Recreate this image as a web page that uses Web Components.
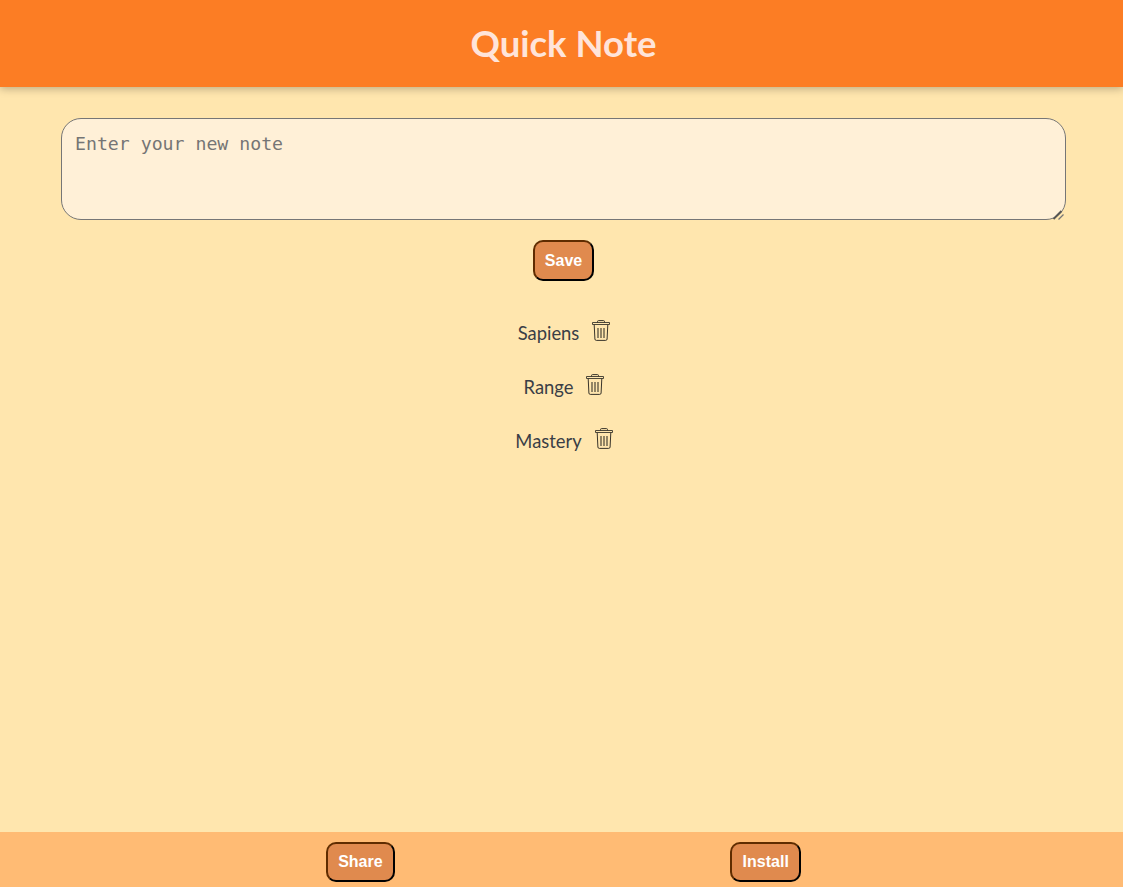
<!DOCTYPE html>
<html lang="en"><head><meta charset="utf-8"><title>Quick Note</title>
<style>
html,body{margin:0;padding:0;height:100%}
body{background:#FFE6AE;font-family:"Lato","Open Sans",sans-serif;color:#333}
</style></head><body>
<template id="t-app"><style>
:host{display:flex;flex-direction:column;height:100vh;overflow:hidden}
main{flex:1;display:flex;flex-direction:column;align-items:center;min-height:0;padding-left:4px}
</style><slot name="header"></slot><main><slot></slot></main><slot name="footer"></slot></template>

<template id="t-header"><style>
:host{display:flex;align-items:center;justify-content:center;height:87px;padding-left:4px;box-sizing:border-box;background:#FC7D24;box-shadow:0 2px 8px rgba(0,0,0,.25);position:relative;z-index:1}
h1{margin:0;font:700 36.5px/1 "Lato",sans-serif;color:#FFE4D9;text-align:center}
</style><h1><slot></slot></h1></template>

<template id="t-editor"><style>
:host{display:flex;flex-direction:column;align-items:center;padding-top:31px}
.box{position:relative;width:1005px;height:102px}
textarea{display:block;box-sizing:border-box;width:100%;height:100%;padding:14px 13px 12px;margin:0;border:1px solid #767676;border-radius:20px;background:#FFF0D7;font:18.2px/1.2 "DejaVu Sans Mono",monospace;color:#333;outline:none;resize:none}
textarea::placeholder{color:#757575;opacity:1}
.grip{position:absolute;right:0;bottom:0;width:14px;height:13px;pointer-events:none}
.actions{padding-top:20px}
</style><div class="box"><textarea placeholder="Enter your new note" aria-label="Enter your new note"></textarea>
<svg class="grip" viewBox="0 0 14 13" fill="none" aria-hidden="true"><path d="M1.5 12L9.5 4" stroke="#555" stroke-width="2"/><path d="M6.5 12.5L11.5 7.5" stroke="#777" stroke-width="1.2"/></svg></div><div class="actions"><slot></slot></div></template>

<template id="t-btn"><style>
:host{display:inline-block}
button{display:block;box-sizing:border-box;height:var(--btn-h,41px);padding:0 var(--btn-pad,10px);border:2px solid;border-color:#5f2c00 #000 #000 #5f2c00;border-radius:10px;background:#E08A4E;color:#fff;font:700 16px "Liberation Sans",Arial,sans-serif;margin:0}
</style><button><slot></slot></button></template>

<template id="t-list"><style>
:host{display:flex;flex-direction:column;align-items:center;padding:24px 0 0 2px}
</style><slot></slot></template>

<template id="t-note"><style>
:host{display:flex;align-items:center;justify-content:center;height:54px;gap:12px}
span{font:18.4px/24px "Lato",sans-serif;font-weight:400;color:#3a3e46;padding-top:2px}
svg{display:block;width:20px;height:23px;margin-top:-4px}
</style><span><slot></slot></span>
<svg viewBox="0 0 20 23" fill="none" stroke="#3a352b" stroke-width="1" aria-hidden="true"><path d="M6.5 3.5V2.6q0-1 1-1h5q1 0 1 1v.9"/><path d="M1.5 3.5h17v2h-17z" stroke-width=".9"/><path d="M3.2 5.6l.7 14.4q.1 1.4 1.4 1.4h9.4q1.3 0 1.4-1.4l.7-14.4"/><path d="M7 9v10M10 9v10M13 9v10" stroke-width="1.1"/></svg></template>

<template id="t-footer"><style>
:host{display:flex;align-items:flex-start;justify-content:center;gap:335px;height:55px;padding:10px 0 0 4px;box-sizing:border-box;background:#FFBB74;--btn-pad:10.5px;--btn-h:40px}
</style><slot></slot></template>

<qn-app>
 <qn-header slot="header">Quick Note</qn-header>
 <qn-editor><qn-btn>Save</qn-btn></qn-editor>
 <qn-list>
  <qn-note>Sapiens</qn-note>
  <qn-note>Range</qn-note>
  <qn-note>Mastery</qn-note>
 </qn-list>
 <qn-footer slot="footer"><qn-btn>Share</qn-btn><qn-btn>Install</qn-btn></qn-footer>
</qn-app>
<script>
for (const [tag,id] of [['qn-app','t-app'],['qn-header','t-header'],['qn-editor','t-editor'],['qn-btn','t-btn'],['qn-list','t-list'],['qn-note','t-note'],['qn-footer','t-footer']]) {
  customElements.define(tag, class extends HTMLElement {
    constructor(){super();this.attachShadow({mode:'open'}).appendChild(document.getElementById(id).content.cloneNode(true));}
  });
}
</script>
</body></html>
